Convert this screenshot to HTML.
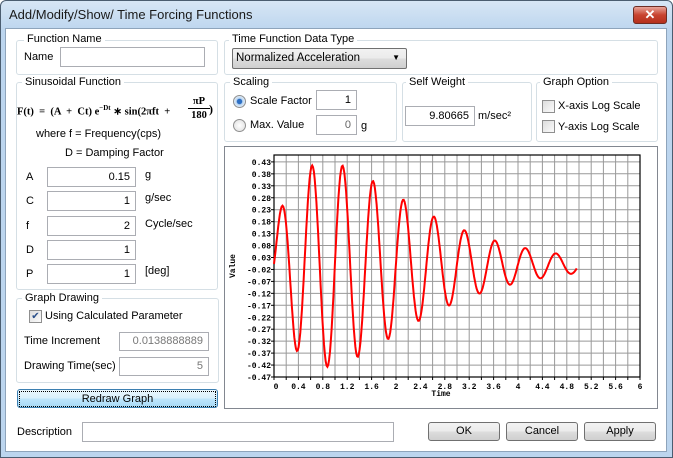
<!DOCTYPE html>
<html><head><meta charset="utf-8">
<style>
*{box-sizing:border-box;margin:0;padding:0}
body{width:673px;height:458px;overflow:hidden;font-family:"Liberation Sans",sans-serif;font-size:11px;color:#000;background:#fff;position:relative}
.a{position:absolute}
.frame{left:0;top:0;width:673px;height:458px;background:linear-gradient(#d7e6f5,#bcd5ee 30px,#bcd5ee);border:1px solid #4b5d70;border-radius:6px 6px 0 0}
.client{left:5px;top:28px;width:662px;height:424px;background:#fff;border:1px solid #8ea4bb}
.title{left:9px;top:7px;font-size:13px;color:#1a1a1a}
.close{left:633px;top:6px;width:34px;height:18px;background:linear-gradient(#e8a59a,#c8432f 50%,#b5301d);border:1px solid #6d2d24;border-radius:3px;color:#fff;font-weight:bold;text-align:center;font-size:13px;line-height:16px}
.grp{border:1px solid #d5dfe5;border-radius:3px}
.lg{background:#fff;padding:0 3px;white-space:nowrap}
.inp{border:1px solid #abadb3;background:#fff;text-align:right;padding-right:5px;line-height:18px;height:20px}
.btn{border:1px solid #707070;border-radius:3px;background:linear-gradient(#f2f2f2,#ebebeb 50%,#dddddd 51%,#cfcfcf);text-align:center;line-height:17px}
.cb{width:13px;height:13px;border:1px solid #8f8f8f;background:linear-gradient(135deg,#ddd,#fbfbfb)}
.rd{width:13px;height:13px;border:1px solid #8f8f8f;border-radius:50%;background:radial-gradient(#fff,#ddd)}
.tk{font-family:"Liberation Mono",monospace;font-size:8px;font-weight:bold}
</style></head><body>
<div class="a frame"></div>
<div class="a title">Add/Modify/Show/ Time Forcing Functions</div>
<div class="a close">✕</div>
<div class="a client"></div>

<div class="a grp" style="left:16px;top:40px;width:202px;height:35px"></div>
<div class="a lg" style="left:24px;top:33px">Function Name</div>
<div class="a" style="left:24px;top:51px">Name</div>
<div class="a inp" style="left:60px;top:47px;width:145px"></div>

<div class="a grp" style="left:224px;top:40px;width:434px;height:35px"></div>
<div class="a lg" style="left:229px;top:33px">Time Function Data Type</div>
<div class="a" style="left:232px;top:48px;width:175px;height:21px;border:1px solid #707070;border-radius:2px;background:linear-gradient(#f2f2f2,#ebebeb 50%,#dddddd 51%,#cfcfcf);padding:3px 0 0 3px;font-size:11.5px">Normalized Acceleration<span class="a" style="right:6px;top:4px;font-size:8px">▼</span></div>

<div class="a grp" style="left:16px;top:82px;width:202px;height:208px"></div>
<div class="a lg" style="left:22px;top:76px">Sinusoidal Function</div>
<div class="a" style="left:17px;top:104px;font-family:'Liberation Serif',serif;font-weight:bold;font-size:10.5px;white-space:nowrap">F(t) &nbsp;= &nbsp;(A &nbsp;+ &nbsp;Ct) e<sup style="font-size:7px">−Dt</sup> ∗ sin(2πft &nbsp;+</div>
<div class="a" style="left:188px;top:95px;font-family:'Liberation Serif',serif;font-weight:bold;font-size:10.5px;text-align:center;width:22px;line-height:13px">πP<br><span style="border-top:1px solid #000;display:block">180</span></div>
<div class="a" style="left:209px;top:102px;font-family:'Liberation Serif',serif;font-weight:bold;font-size:12px">)</div>
<div class="a" style="left:36px;top:128px">where f = Frequency(cps)</div>
<div class="a" style="left:65px;top:147px">D = Damping Factor</div>
<div class="a" style="left:26px;top:171px">A</div><div class="a inp" style="left:47px;top:167px;width:89px">0.15</div><div class="a" style="left:145px;top:169px">g</div>
<div class="a" style="left:26px;top:195px">C</div><div class="a inp" style="left:47px;top:191px;width:89px">1</div><div class="a" style="left:145px;top:192px">g/sec</div>
<div class="a" style="left:26px;top:220px">f</div><div class="a inp" style="left:47px;top:216px;width:89px">2</div><div class="a" style="left:145px;top:218px">Cycle/sec</div>
<div class="a" style="left:26px;top:244px">D</div><div class="a inp" style="left:47px;top:240px;width:89px">1</div>
<div class="a" style="left:26px;top:268px">P</div><div class="a inp" style="left:47px;top:264px;width:89px">1</div><div class="a" style="left:145px;top:265px">[deg]</div>

<div class="a grp" style="left:16px;top:298px;width:203px;height:85px"></div>
<div class="a lg" style="left:22px;top:292px">Graph Drawing</div>
<div class="a cb" style="left:29px;top:310px;font-size:10px;line-height:11px;color:#2a4f8a;text-align:center">✔</div>
<div class="a" style="left:45px;top:310px">Using Calculated Parameter</div>
<div class="a" style="left:24px;top:335px">Time Increment</div>
<div class="a inp" style="left:119px;top:332px;width:90px;color:#777;height:19px;line-height:17px">0.0138888889</div>
<div class="a" style="left:24px;top:360px">Drawing Time(sec)</div>
<div class="a inp" style="left:119px;top:357px;width:90px;color:#777;height:19px;line-height:17px">5</div>
<div class="a btn" style="left:17px;top:389px;width:201px;height:19px;border-color:#3c7fb1;background:linear-gradient(#eaf6fd,#d9f0fc 50%,#bee6fd 51%,#a7d9f5)"><span style="display:block;border:1px dotted #000;margin:1px;line-height:14px">Redraw Graph</span></div>

<div class="a grp" style="left:224px;top:82px;width:173px;height:60px"></div>
<div class="a lg" style="left:230px;top:76px">Scaling</div>
<div class="a rd" style="left:233px;top:95px;background:radial-gradient(#2d6fc4 30%,#bcd6f0 40%,#fff)"></div>
<div class="a" style="left:250px;top:95px">Scale Factor</div>
<div class="a inp" style="left:316px;top:90px;width:41px">1</div>
<div class="a rd" style="left:233px;top:119px"></div>
<div class="a" style="left:250px;top:119px">Max. Value</div>
<div class="a inp" style="left:316px;top:115px;width:41px;color:#666">0</div>
<div class="a" style="left:361px;top:120px">g</div>

<div class="a grp" style="left:402px;top:82px;width:130px;height:60px"></div>
<div class="a lg" style="left:406px;top:76px">Self Weight</div>
<div class="a inp" style="left:405px;top:106px;width:70px">9.80665</div>
<div class="a" style="left:478px;top:110px">m/sec²</div>

<div class="a grp" style="left:536px;top:82px;width:122px;height:60px"></div>
<div class="a lg" style="left:540px;top:76px">Graph Option</div>
<div class="a cb" style="left:542px;top:100px"></div><div class="a" style="left:558px;top:100px">X-axis Log Scale</div>
<div class="a cb" style="left:542px;top:120px"></div><div class="a" style="left:558px;top:121px">Y-axis Log Scale</div>

<div class="a" style="left:224px;top:146px;width:434px;height:263px;border:1px solid #828790;background:#fff"></div>
<svg class="a" style="left:0;top:0" width="673" height="458" id="g"></svg>

<div class="a" style="left:17px;top:426px">Description</div>
<div class="a inp" style="left:82px;top:422px;width:312px"></div>
<div class="a btn" style="left:428px;top:422px;width:72px;height:19px">OK</div>
<div class="a btn" style="left:506px;top:422px;width:72px;height:19px">Cancel</div>
<div class="a btn" style="left:584px;top:422px;width:72px;height:19px">Apply</div>

<script>
var s='';var X0=274,X1=640,Y0=155,Y1=377;
function px(t){return X0+t*61}function py(v){return 377-(v+0.47)*239}
for(var i=1;i<30;i++){var x=(X0+i*12.2).toFixed(1);s+='<line x1="'+x+'" y1="'+Y0+'" x2="'+x+'" y2="'+Y1+'" stroke="#999" stroke-width="1"/>';}
for(var k=1;k<=18;k++){var y=(py(-0.47+k*0.05)).toFixed(1);s+='<line x1="'+X0+'" y1="'+y+'" x2="'+X1+'" y2="'+y+'" stroke="#999" stroke-width="1"/>';}
s+='<rect x="'+X0+'" y="'+Y0+'" width="'+(X1-X0)+'" height="'+(Y1-Y0)+'" fill="none" stroke="#000" stroke-width="1.2"/>';
for(var k=0;k<=18;k++){var v=-0.47+k*0.05;var y=py(v);s+='<text class="tk" x="271" y="'+(y+3).toFixed(1)+'" text-anchor="end">'+(v<0?'-':'')+Math.abs(v).toFixed(2)+'</text>';s+='<line x1="'+(X0-3)+'" y1="'+y+'" x2="'+X0+'" y2="'+y+'" stroke="#000"/>';}
for(var i=0;i<=15;i++){var t=i*0.4;var x=px(t);var l=(Math.round(t*10)/10).toString();s+='<text class="tk" x="'+(x+(i==0?2:0))+'" y="389" text-anchor="middle">'+l+'</text>';}
for(var i=0;i<=30;i++){var x=X0+i*12.2;s+='<line x1="'+x+'" y1="'+Y1+'" x2="'+x+'" y2="'+(Y1+3)+'" stroke="#000"/>';}
s+='<text class="tk" x="441" y="396" text-anchor="middle">Time</text>';
s+='<text class="tk" x="235" y="266" text-anchor="middle" transform="rotate(-90 235 266)">Value</text>';
var p=[];for(var t=0;t<=4.97;t+=0.0139){var v=(0.15+t)*Math.exp(-t)*Math.sin(4*Math.PI*t+Math.PI/180);p.push(px(t).toFixed(1)+','+py(v).toFixed(1));}
s+='<polyline points="'+p.join(' ')+'" fill="none" stroke="#f00" stroke-width="2"/>';
document.getElementById('g').innerHTML=s;
</script>
</body></html>
